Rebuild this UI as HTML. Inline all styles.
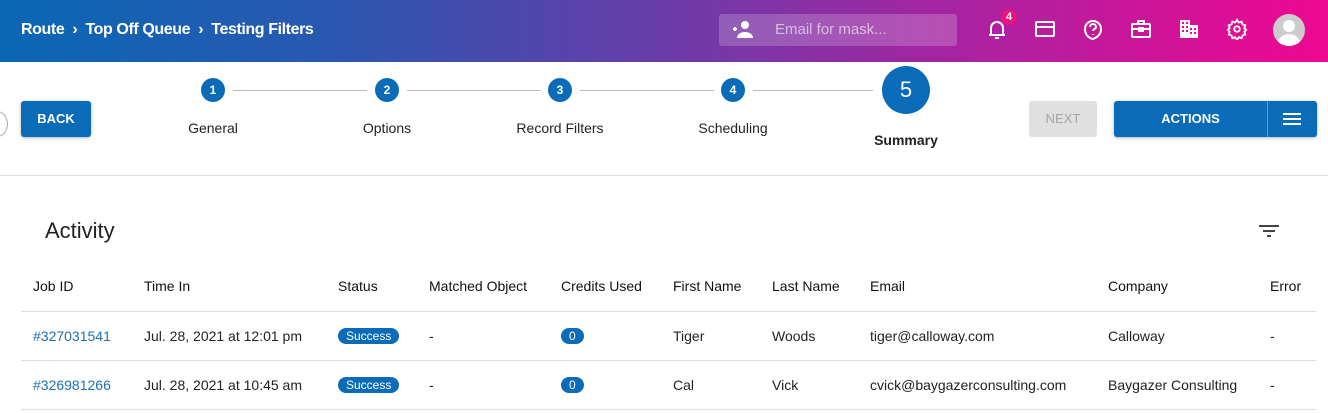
<!DOCTYPE html>
<html><head><style>
*{margin:0;padding:0;box-sizing:border-box}
body{width:1328px;height:413px;overflow:hidden;background:#fff;font-family:"Liberation Sans",sans-serif;color:#222;position:relative}
.hdr{position:absolute;left:0;top:0;width:1328px;height:62px;background:linear-gradient(90deg,#0a67b5 0%,#2a58b0 25%,#6a3ca8 50%,#b020a0 75%,#ef0891 100%)}
.a{position:absolute}
.crumb{left:21px;top:21px;color:#fff;font-weight:bold;font-size:16px;letter-spacing:-0.4px}
.search{left:719px;top:14px;width:238px;height:32px;background:rgba(255,255,255,0.2);border-radius:3px}
.search span{position:absolute;left:56px;top:7px;color:rgba(255,255,255,0.6);font-size:15px}
.ic{position:absolute;top:18px}
.step{position:absolute;width:24px;height:24px;border-radius:50%;background:#0a6bb8;color:#fff;font-size:12px;font-weight:bold;text-align:center;line-height:24px;top:78px}
.line{position:absolute;top:90px;height:1px;background:#bbb}
.lbl{position:absolute;top:120px;font-size:14px;color:#222;transform:translateX(-50%);white-space:nowrap}
.btn{position:absolute;border-radius:3px;font-size:13px;font-weight:bold;text-align:center;color:#fff;box-shadow:0 1px 3px rgba(0,0,0,.3)}
table{position:absolute;left:21px;top:262px;width:1295px;border-collapse:collapse;font-size:14px}
td,th{text-align:left;font-weight:normal;padding-left:12px;height:49px;border-bottom:1px solid #ddd;white-space:nowrap;vertical-align:middle}
th{color:#111}
.lnk{color:#1d6fb8}
.pill{display:inline-block;background:#0a6bb8;color:#fff;font-size:12px;line-height:16px;border-radius:9px;padding:0 8px;vertical-align:middle}
</style></head><body>
<div class="hdr">
<div class="a crumb">Route &nbsp;›&nbsp; Top Off Queue &nbsp;›&nbsp; Testing Filters</div>
<div class="a search"><svg class="a" style="left:12px;top:6px" width="24" height="20" viewBox="0 0 24 20"><path d="M2 9h4M4 7v4" stroke="#fff" stroke-width="2"/><circle cx="14" cy="5" r="4" fill="#fff"/><path d="M6 18c0-4 4-6 8-6s8 2 8 6z" fill="#fff"/></svg><span>Email for mask...</span></div>
<svg class="ic" style="left:986px" width="22" height="22" viewBox="0 0 22 22" fill="none" stroke="#fff" stroke-width="2"><path d="M5 17V10a6 6 0 0 1 12 0v7zM3 17h16M9 20h4"/></svg>
<div class="a" style="left:1001px;top:9px;width:16px;height:16px;border-radius:50%;background:#e8157e;color:#fff;font-size:11px;font-weight:bold;text-align:center;line-height:16px">4</div>
<svg class="ic" style="left:1034px" width="22" height="22" viewBox="0 0 22 22" fill="none" stroke="#fff" stroke-width="2"><rect x="2" y="4" width="18" height="14" rx="1"/><path d="M2 9h18"/></svg>
<svg class="ic" style="left:1082px" width="22" height="24" viewBox="0 0 22 24" fill="none" stroke="#fff" stroke-width="2"><path d="M11 21c-5-1-8-5-8-10a8 8 0 0 1 16 0c0 5-3 8-8 10z"/><path d="M8 9a3 3 0 0 1 6 0c0 2-3 2-3 4M11 16v1"/></svg>
<svg class="ic" style="left:1130px" width="22" height="22" viewBox="0 0 22 22" fill="none" stroke="#fff" stroke-width="2"><rect x="2" y="6" width="18" height="13" rx="1"/><path d="M8 6V3h6v3M2 11h18"/><rect x="9" y="10" width="4" height="3" fill="#fff"/></svg>
<svg class="ic" style="left:1178px" width="22" height="22" viewBox="0 0 22 22" fill="#fff"><path d="M2 2h10v5h8v13H2z M4 4v2h2V4z M8 4v2h2V4z M4 8v2h2V8z M8 8v2h2V8z M4 12v2h2v-2z M8 12v2h2v-2z M12 10v2h2v-2z M16 10v2h2v-2z M12 14v2h2v-2z M16 14v2h2v-2z" fill-rule="evenodd"/></svg>
<svg class="ic" style="left:1226px" width="22" height="22" viewBox="0 0 24 24" fill="none" stroke="#fff" stroke-width="2"><circle cx="12" cy="12" r="3"/><path d="M12 2l2 3 3-1 1 3 3 1-1 3 2 2-2 2 1 3-3 1-1 3-3-1-2 3-2-3-3 1-1-3-3-1 1-3-2-2 2-2-1-3 3-1 1-3 3 1z"/></svg>
<div class="a" style="left:1273px;top:14px;width:32px;height:32px;border-radius:50%;background:#ccc;overflow:hidden"><div class="a" style="left:10px;top:6px;width:12px;height:12px;border-radius:50%;background:#fff"></div><div class="a" style="left:4px;top:20px;width:24px;height:16px;border-radius:12px 12px 0 0;background:#fff"></div></div>
</div>
<div class="a" style="left:-14px;top:111px;width:22px;height:26px;border:1px solid #aaa;border-radius:50%"></div>
<div class="btn" style="left:21px;top:101px;width:70px;height:36px;line-height:36px;background:#0a6bb8">BACK</div>
<div class="step" style="left:201px">1</div><div class="line" style="left:233px;width:134px"></div>
<div class="step" style="left:375px">2</div><div class="line" style="left:407px;width:134px"></div>
<div class="step" style="left:548px">3</div><div class="line" style="left:580px;width:134px"></div>
<div class="step" style="left:721px">4</div><div class="line" style="left:753px;width:120px"></div>
<div class="step" style="left:882px;top:66px;width:48px;height:48px;line-height:48px;font-size:22px;font-weight:normal">5</div>
<div class="lbl" style="left:213px">General</div>
<div class="lbl" style="left:387px">Options</div>
<div class="lbl" style="left:560px">Record Filters</div>
<div class="lbl" style="left:733px">Scheduling</div>
<div class="lbl" style="left:906px;top:132px;font-weight:bold">Summary</div>
<div class="btn" style="left:1029px;top:101px;width:68px;height:36px;line-height:36px;background:#e0e0e0;color:#a5a5a5;box-shadow:none;font-weight:normal">NEXT</div>
<div class="btn" style="left:1114px;top:101px;width:203px;height:36px;line-height:36px;background:#0a6bb8"><span style="position:absolute;left:0;width:153px">ACTIONS</span><div class="a" style="left:153px;top:0;width:1px;height:36px;background:rgba(255,255,255,.35)"></div><svg class="a" style="left:168px;top:10px" width="20" height="16"><path d="M1 3h18M1 8h18M1 13h18" stroke="#fff" stroke-width="2"/></svg></div>
<div class="a" style="left:0;top:175px;width:1328px;height:1px;background:#ddd"></div>
<div class="a" style="left:45px;top:218px;font-size:22px;color:#222">Activity</div>
<svg class="a" style="left:1259px;top:224px" width="20" height="14"><path d="M0 2h20M4 7h12M8 12h4" stroke="#444" stroke-width="2"/></svg>
<table>
<tr><th style="width:111px">Job ID</th><th style="width:194px">Time In</th><th style="width:91px">Status</th><th style="width:132px">Matched Object</th><th style="width:112px">Credits Used</th><th style="width:99px">First Name</th><th style="width:98px">Last Name</th><th style="width:238px">Email</th><th style="width:162px">Company</th><th>Error</th></tr>
<tr><td class="lnk">#327031541</td><td>Jul. 28, 2021 at 12:01 pm</td><td><span class="pill">Success</span></td><td>-</td><td><span class="pill">0</span></td><td>Tiger</td><td>Woods</td><td>tiger@calloway.com</td><td>Calloway</td><td>-</td></tr>
<tr><td class="lnk">#326981266</td><td>Jul. 28, 2021 at 10:45 am</td><td><span class="pill">Success</span></td><td>-</td><td><span class="pill">0</span></td><td>Cal</td><td>Vick</td><td>cvick@baygazerconsulting.com</td><td>Baygazer Consulting</td><td>-</td></tr>
</table>
</body></html>
